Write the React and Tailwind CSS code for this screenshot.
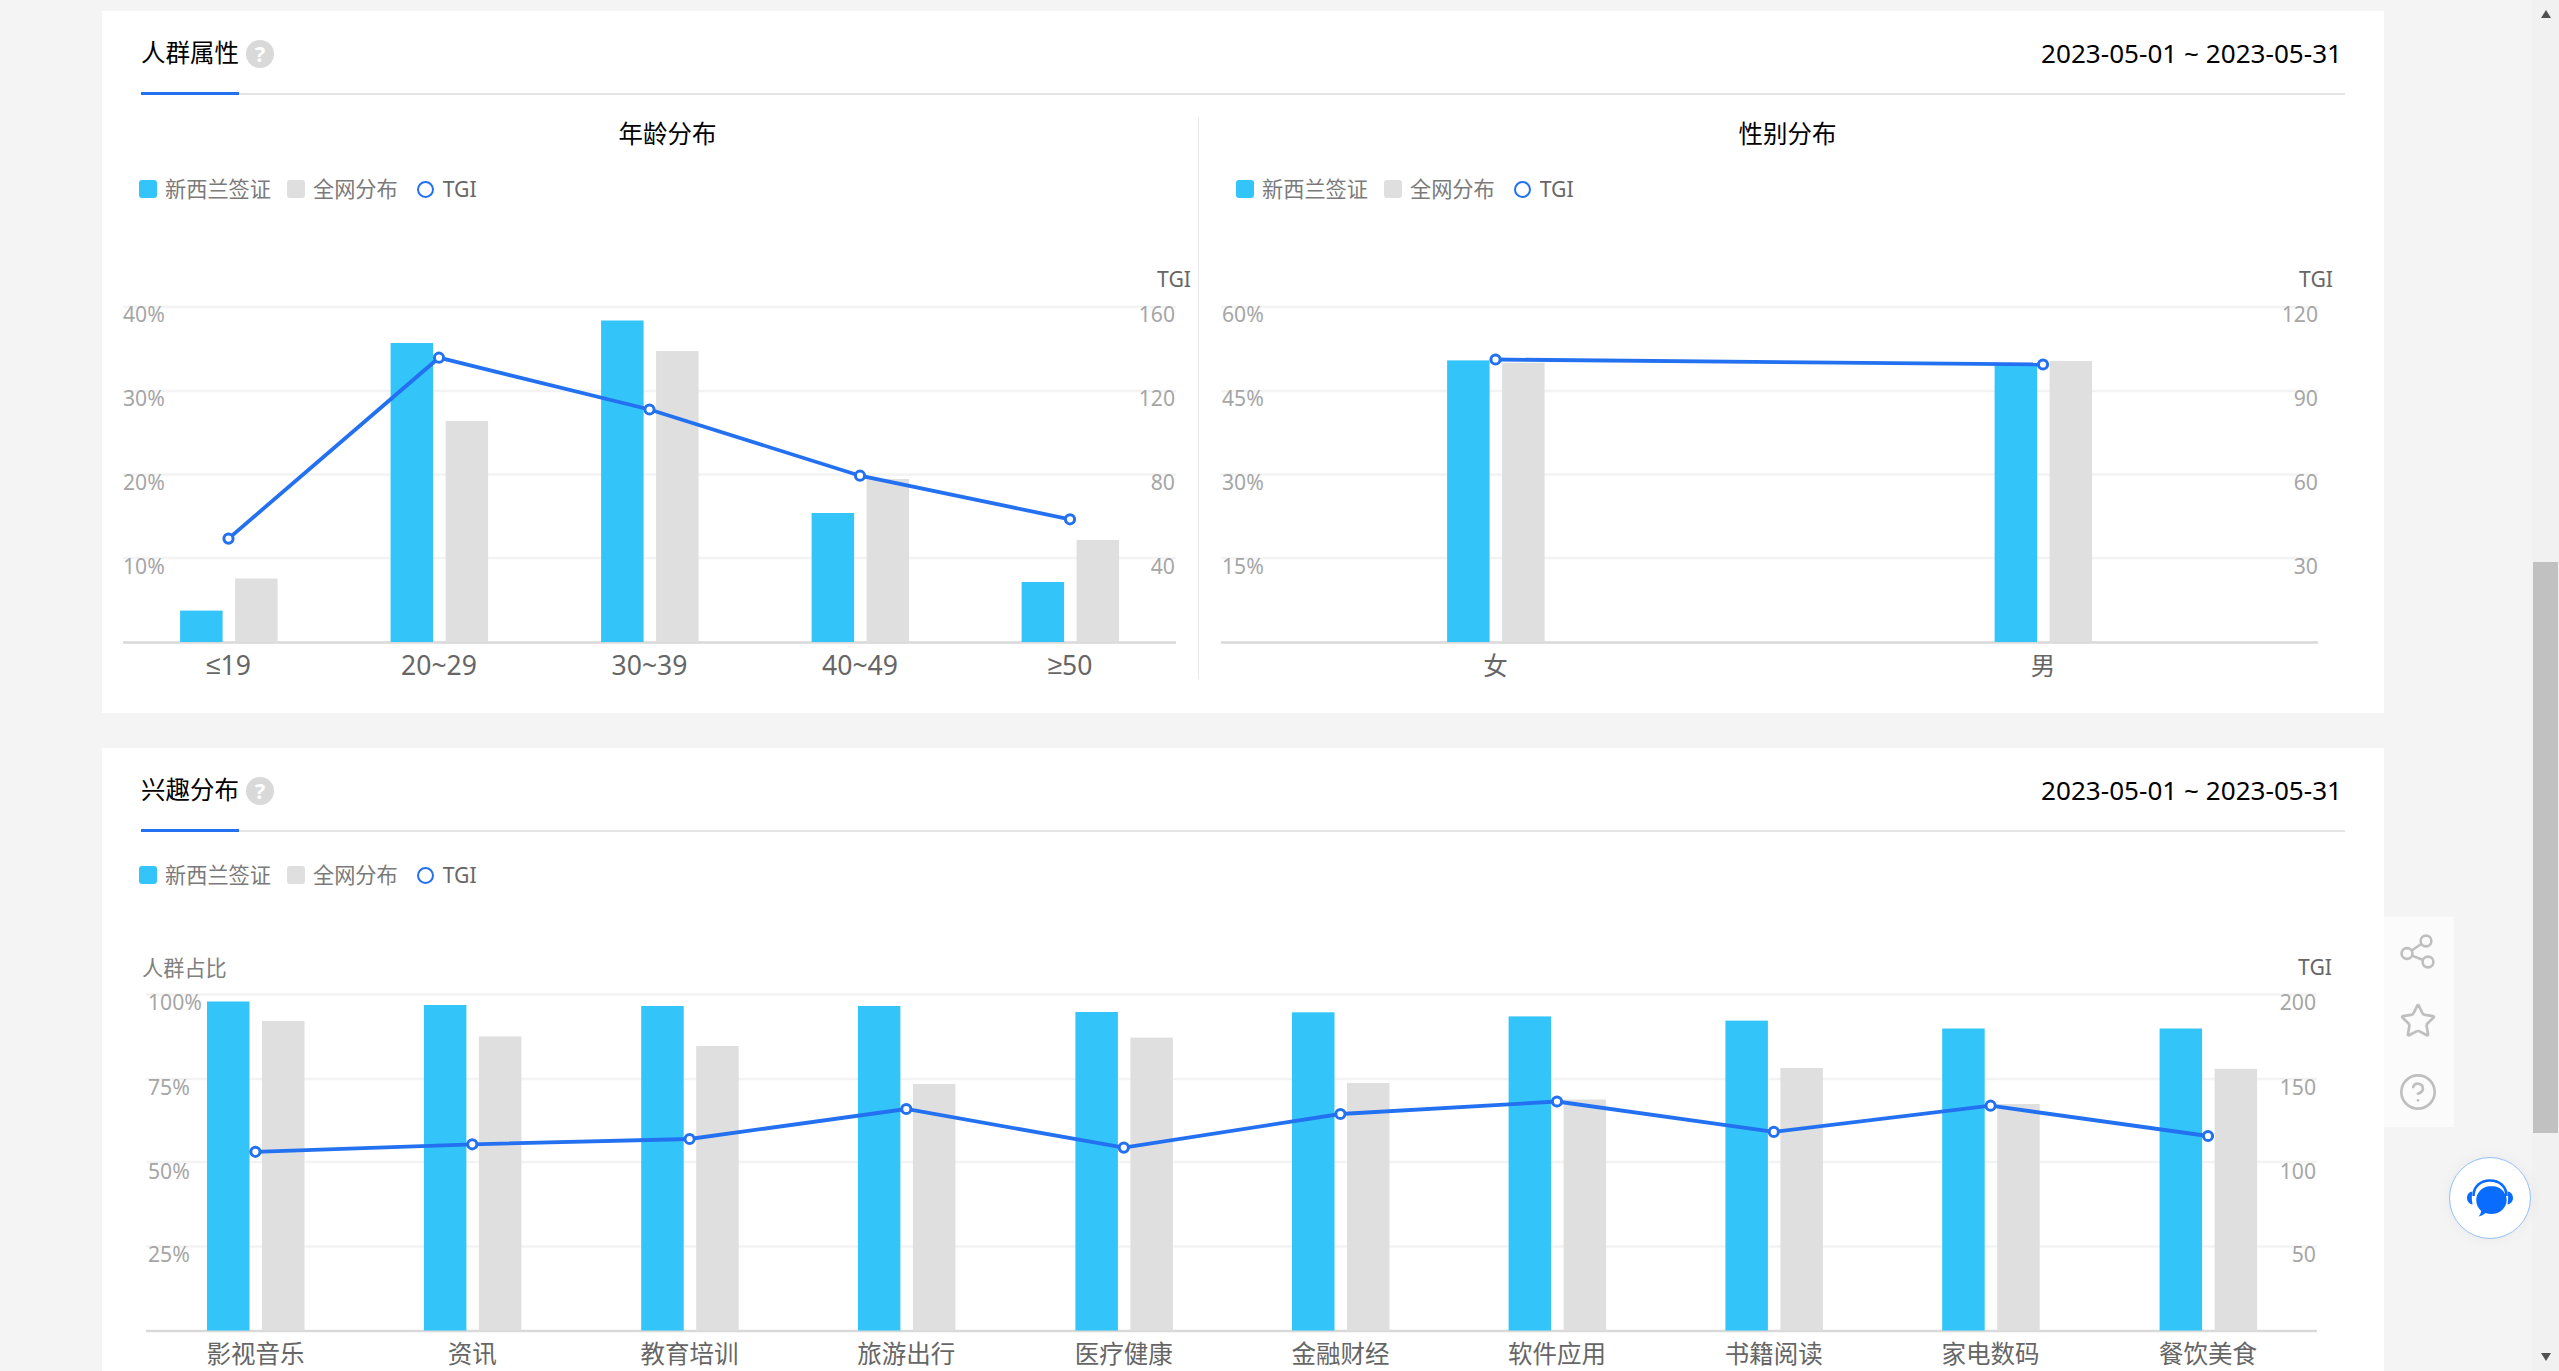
import { CircleHelp, Star } from 'lucide-react';

const BLUE = '#33c5fa';
const GRAY = '#dfdfdf';
const LINE = '#2371f0';

const ageBars = [
  { c: 228.5, sign: '≤', label: '19', b: 610.6, g: 578.5, t: 538.6 },
  { c: 439, label: '20~29', b: 343, g: 421, t: 357.7 },
  { c: 649.5, label: '30~39', b: 320.5, g: 351, t: 409.5 },
  { c: 860, label: '40~49', b: 513, g: 479, t: 475.7 },
  { c: 1070, sign: '≥', label: '50', b: 582, g: 540, t: 519.3 },
];

const genderBars = [
  { c: 1495.5, label: '女', b: 360.4, g: 362.7, t: 359.5 },
  { c: 2043, label: '男', b: 365, g: 361, t: 364.5 },
];

const interestBars = [
  { c: 255.4, label: '影视音乐', b: 1001.5, g: 1021, t: 1151.8 },
  { c: 472.3, label: '资讯', b: 1005, g: 1036.4, t: 1144.3 },
  { c: 689.6, label: '教育培训', b: 1006, g: 1046, t: 1139 },
  { c: 906.3, label: '旅游出行', b: 1006, g: 1084, t: 1109 },
  { c: 1123.8, label: '医疗健康', b: 1012, g: 1037.6, t: 1147.6 },
  { c: 1340.4, label: '金融财经', b: 1012.3, g: 1082.9, t: 1114 },
  { c: 1557, label: '软件应用', b: 1016.4, g: 1099.5, t: 1101.5 },
  { c: 1773.8, label: '书籍阅读', b: 1020.6, g: 1068, t: 1131.9 },
  { c: 1990.6, label: '家电数码', b: 1028.5, g: 1104, t: 1105.7 },
  { c: 2208, label: '餐饮美食', b: 1028.5, g: 1068.8, t: 1136 },
];

function Bars({ data, base, left = 48.4, gap = 6.6, w = 42.5 }) {
  return data.map((d) => (
    <g key={d.label}>
      <rect x={d.c - left} y={d.b} width={w} height={base - d.b} fill={BLUE} />
      <rect x={d.c + gap} y={d.g} width={w} height={base - d.g} fill={GRAY} />
    </g>
  ));
}

function TgiLine({ data }) {
  return (
    <g>
      <polyline points={data.map((d) => `${d.c},${d.t}`).join(' ')} fill="none" stroke={LINE} strokeWidth="3.8" />
      {data.map((d) => (
        <circle key={d.label} cx={d.c} cy={d.t} r="4.6" fill="#fff" stroke={LINE} strokeWidth="3" />
      ))}
    </g>
  );
}

function Grid({ ys, base, x1, x2 }) {
  return (
    <g>
      {ys.map((y) => (
        <line key={y} x1={x1} x2={x2} y1={y} y2={y} stroke="#f3f3f3" strokeWidth="2.4" />
      ))}
      <line x1={x1} x2={x2} y1={base} y2={base} stroke="#d9d9d9" strokeWidth="2.4" />
    </g>
  );
}

function Axis({ labels, x, anchor = 'start', color = '#a6a6a6' }) {
  return labels.map(([text, y]) => (
    <text key={text} x={x} y={y - 1} textAnchor={anchor} dominantBaseline="central" fontSize="21.2" fill={color}>
      {text}
    </text>
  ));
}

function XLabels({ data, y, size = 24.5 }) {
  return data.map((d) => (
    <text key={d.label} x={d.c} y={y} textAnchor="middle" dominantBaseline="central" fontSize={size} fill="#666">
      {/* the CJK font draws these signs far too wide */}
      {d.sign && <tspan fontFamily="Liberation Sans">{d.sign}</tspan>}
      {d.label}
    </text>
  ));
}

function AgeChart() {
  return (
    <svg viewBox="123 270 1090 425" className="block w-[1090px] h-[425px] -ml-[14px] overflow-visible">
      <Grid ys={[307, 391, 474.5, 558]} base={642.5} x1={123} x2={1176} />
      <Bars data={ageBars} base={642} />
      <TgiLine data={ageBars} />
      <Axis labels={[['40%', 314.5], ['30%', 398.5], ['20%', 482.5], ['10%', 566]]} x={123} />
      <Axis labels={[['160', 314.5], ['120', 398.5], ['80', 482.5], ['40', 566]]} x={1175} anchor="end" />
      <Axis labels={[['TGI', 279]]} x={1191} anchor="end" color="#666" />
      <XLabels data={ageBars} y={665} size={26.5} />
    </svg>
  );
}

function GenderChart() {
  return (
    <svg viewBox="1199 270 1150 425" className="block w-[1150px] h-[425px] overflow-visible">
      <Grid ys={[307, 391, 474.5, 558]} base={642.5} x1={1221} x2={2318} />
      <Bars data={genderBars} base={642} />
      <TgiLine data={genderBars} />
      <Axis labels={[['60%', 314.5], ['45%', 398.5], ['30%', 482.5], ['15%', 566]]} x={1222} />
      <Axis labels={[['120', 314.5], ['90', 398.5], ['60', 482.5], ['30', 566]]} x={2318} anchor="end" />
      <Axis labels={[['TGI', 279]]} x={2333} anchor="end" color="#666" />
      <XLabels data={genderBars} y={665} />
    </svg>
  );
}

function InterestChart() {
  return (
    <svg viewBox="141 950 2204 421" className="block w-[2204px] h-[421px] overflow-visible">
      <Grid ys={[994.5, 1079, 1162, 1246.5]} base={1331} x1={146} x2={2317} />
      <Bars data={interestBars} base={1330.5} />
      <TgiLine data={interestBars} />
      <Axis labels={[['人群占比', 968]]} x={142} color="#808080" />
      <Axis labels={[['100%', 1002.7], ['75%', 1087], ['50%', 1171.3], ['25%', 1254.3]]} x={148} />
      <Axis labels={[['200', 1002.7], ['150', 1087], ['100', 1171.3], ['50', 1254.3]]} x={2316} anchor="end" />
      <Axis labels={[['TGI', 967.5]]} x={2332} anchor="end" color="#666" />
      <XLabels data={interestBars} y={1353.4} />
    </svg>
  );
}

function Legend({ className = '' }) {
  return (
    <div className={`flex items-center h-[18px] text-[21.2px] leading-[18px] text-[#7a7a7a] ${className}`}>
      <span className="w-[18px] h-[18px] rounded-[3px] bg-[#33c5fa]" />
      <span className="ml-[8px]">新西兰签证</span>
      <span className="ml-[16px] w-[18px] h-[18px] rounded-[3px] bg-[#dfdfdf]" />
      <span className="ml-[8px]">全网分布</span>
      <span className="ml-[19px] w-[17px] h-[17px] rounded-full border-2 border-[#2371f0]" />
      <span className="ml-[9px] text-[#666]">TGI</span>
    </div>
  );
}

function CardHeader({ title, bodyClass = '' }) {
  return (
    <div className={`relative flex items-center justify-between pt-[3px] border-b-2 border-[#e4e4e4] ${bodyClass}`}>
      <div className="flex items-center">
        <span className="text-[24.48px] text-black">{title}</span>
        <span className="ml-[7px] w-[28px] h-[28px] rounded-full bg-[#d9d9d9] text-white text-[22px] font-bold flex items-center justify-center">?</span>
      </div>
      <span className="pr-[3px] text-[26.1px] text-black">2023-05-01 ~ 2023-05-31</span>
      <span className="absolute left-0 -bottom-[2px] w-[98px] h-[3px] bg-[#2371f0]" />
    </div>
  );
}

function ShareIcon() {
  return (
    <svg width="36" height="36" viewBox="0 0 36 36" fill="none" stroke="#bfbfbf" strokeWidth="2.6">
      <circle cx="26" cy="7" r="5.4" />
      <circle cx="7" cy="19.5" r="5.4" />
      <circle cx="28" cy="28" r="5.4" />
      <path d="M11.6 16.5 21.4 10M12 21.6 23 26" />
    </svg>
  );
}

function HeadsetIcon() {
  return (
    <svg width="46" height="38" viewBox="0 0 46 38" fill="#0a6cff">
      <path d="M6.5 17C6.5 7 14 1.500 23 1.500S39.500 7 39.500 17" fill="none" stroke="#0a6cff" strokeWidth="2.6" />
      <path d="M5.400 12.500C1.600 13 0 16 0 19s2 6 5.600 6.500C4.600 21 4.600 17 5.400 12.500z" />
      <path d="M40.600 12.500C44.400 13 46 16 46 19s-2 6-5.600 6.500c1-4.500 1-8.500 0-13z" />
      <path d="M24.300 7c8.500 0 15.400 6.200 15.400 14s-6.900 14-15.400 14c-2 0-4-.4-5.800-1-2 1.600-4.500 3-7 3.400 1.300-1.200 2.300-3 2.700-5.400-3-2.600-5-6.400-5-11 0-7.800 6.900-14 15.300-14z" />
    </svg>
  );
}

function Triangle({ d }) {
  return (
    <svg width="12" height="10" viewBox="0 0 12 10" fill="#505050">
      <polygon points={d} />
    </svg>
  );
}

export default function App() {
  return (
    <div className="relative flex w-[2559px] h-[1371px] overflow-hidden bg-[#f4f4f4] font-['Noto_Sans','Noto_Sans_CJK_SC',sans-serif]">
      <main className="w-[2532px] pl-[102px] pt-[11px]">
        {/* 人群属性 */}
        <section className="w-[2282px] h-[702px] bg-white px-[39px]">
          <CardHeader title="人群属性" bodyClass="h-[84px]" />
          <div className="flex mt-[22px] h-[562px] -ml-[4px]">
            <div className="w-[1062px] border-r border-[#e8e8e8]">
              <h3 className="text-[24.48px] leading-[33px] text-center text-black font-normal">年龄分布</h3>
              <Legend className="mt-[30px] pl-[2px]" />
              <div className="mt-[72px]">
                <AgeChart />
              </div>
            </div>
            <div className="w-[1150px]">
              <h3 className="text-[24.48px] leading-[33px] text-center text-black font-normal pl-[27px]">性别分布</h3>
              <Legend className="mt-[30px] pl-[37px]" />
              <div className="mt-[72px]">
                <GenderChart />
              </div>
            </div>
          </div>
        </section>

        {/* 兴趣分布 */}
        <section className="mt-[35px] w-[2282px] h-[700px] bg-white px-[39px]">
          <CardHeader title="兴趣分布" bodyClass="h-[84px]" />
          <Legend className="mt-[34px] -ml-[2px]" />
          <div className="mt-[66px]">
            <InterestChart />
          </div>
        </section>
      </main>

      {/* scrollbar */}
      <div className="w-[27px] flex flex-col bg-[#f1f1f1]">
        <div className="h-[27px] flex items-center justify-center">
          <Triangle d="6,1 11,9 1,9" />
        </div>
        <div className="h-[535px]" />
        <div className="ml-[1px] w-[25px] h-[571px] bg-[#c1c1c1]" />
        <div className="flex-1 flex items-end justify-center pb-[9px]">
          <Triangle d="1,1 11,1 6,9" />
        </div>
      </div>

      {/* floating tools */}
      <div className="absolute left-[2384px] top-[917px] w-[70px] h-[210px] bg-[#fbfbfb] flex flex-col items-center justify-between pt-[17px] pb-[15px] pr-[2px]">
        <ShareIcon />
        <Star size={38} strokeWidth={1.7} color="#bfbfbf" />
        <CircleHelp size={40} strokeWidth={1.6} color="#bfbfbf" />
      </div>
      <button className="absolute left-[2449px] top-[1157px] w-[82px] h-[82px] rounded-full bg-white border border-[#93c0fb] shadow-[0_0_14px_rgba(0,0,0,0.05)] flex items-center justify-center">
        <HeadsetIcon />
      </button>
    </div>
  );
}
